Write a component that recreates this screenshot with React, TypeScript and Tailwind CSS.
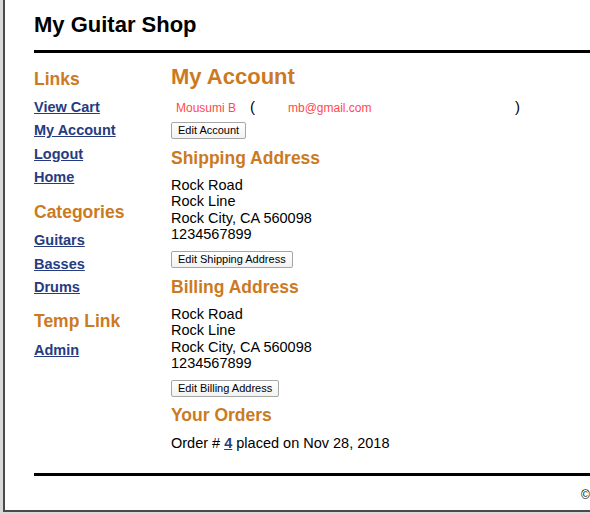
import React from 'react';

const sideLinks = ['View Cart', 'My Account', 'Logout', 'Home'];
const categories = ['Guitars', 'Basses', 'Drums'];

const address = ['Rock Road', 'Rock Line', 'Rock City, CA 560098', '1234567899'];

function EditButton({ label }: { label: string }) {
  return (
    <button className="block h-[17px] px-[6px] border border-[#a6a6a6] rounded-[2px] bg-gradient-to-b from-white to-[#f2f2f2] text-[11px] leading-[15px] text-black">
      {label}
    </button>
  );
}

function Address() {
  return (
    <div className="mt-[8.8px] text-[14.5px] leading-[16.4px] text-black">
      {address.map((line) => (
        <div key={line}>{line}</div>
      ))}
    </div>
  );
}

export default function App() {
  return (
    <div
      className="w-[590px] h-[514px] overflow-hidden bg-[#d9d9d9]"
      style={{ fontFamily: '"Liberation Sans", Arial, sans-serif' }}
    >
      <div className="ml-[3px] w-[800px] h-[512px] bg-white border-l-2 border-b-2 border-[#4a4a4a] pl-[29px]">
        {/* Header */}
        <header className="pt-[13px]">
          <h1 className="text-[22px] leading-[24px] font-bold text-black">My Guitar Shop</h1>
          <div className="mt-[13px] h-[3px] bg-black" />
        </header>

        {/* Body */}
        <div className="flex h-[420px]">
          {/* Sidebar */}
          <aside className="w-[137px] shrink-0">
            <h2 className="mt-[16px] text-[17.5px] leading-[20px] font-bold text-[#cc7a1f]">Links</h2>
            <ul className="mt-[7px]">
              {sideLinks.map((l) => (
                <li key={l} className="text-[14.5px] leading-[23.4px] font-bold">
                  <a href="#" className="text-[#263b80] underline">{l}</a>
                </li>
              ))}
            </ul>
            <h2 className="mt-[12.5px] text-[17.5px] leading-[20px] font-bold text-[#cc7a1f]">Categories</h2>
            <ul className="mt-[7px]">
              {categories.map((l) => (
                <li key={l} className="text-[14.5px] leading-[23.4px] font-bold">
                  <a href="#" className="text-[#263b80] underline">{l}</a>
                </li>
              ))}
            </ul>
            <h2 className="mt-[12px] text-[17.5px] leading-[20px] font-bold text-[#cc7a1f]">Temp Link</h2>
            <div className="mt-[7.8px] text-[14.5px] leading-[23.4px] font-bold">
              <a href="#" className="text-[#263b80] underline">Admin</a>
            </div>
          </aside>

          {/* Main */}
          <main className="flex-1">
            <h1 className="mt-[11px] text-[22px] leading-[26px] font-bold text-[#cc7a1f]">My Account</h1>
            <div className="mt-[8px] flex items-baseline h-[18px] text-[15px] leading-[18px] text-black">
              <span className="w-[79px] pl-[5px] text-[12px] text-[#ff4a4a]">Mousumi B</span>
              <span>(</span>
              <span className="w-[260px] pl-[33px] text-[12px] text-[#ff4a4a]">mb@gmail.com</span>
              <span>)</span>
            </div>
            <div className="mt-[6px]">
              <EditButton label="Edit Account" />
            </div>

            <h2 className="mt-[9px] text-[17.5px] leading-[20px] font-bold text-[#cc7a1f]">Shipping Address</h2>
            <Address />
            <div className="mt-[8.6px]">
              <EditButton label="Edit Shipping Address" />
            </div>

            <h2 className="mt-[9px] text-[17.5px] leading-[20px] font-bold text-[#cc7a1f]">Billing Address</h2>
            <Address />
            <div className="mt-[8.6px]">
              <EditButton label="Edit Billing Address" />
            </div>

            <h2 className="mt-[8px] text-[17.5px] leading-[20px] font-bold text-[#cc7a1f]">Your Orders</h2>
            <p className="mt-[9px] text-[14.5px] leading-[18px] text-black">
              Order #{' '}
              <a href="#" className="font-bold text-[#263b80] underline">4</a> placed on Nov 28, 2018
            </p>
          </main>
        </div>

        {/* Footer */}
        <footer>
          <div className="h-[3px] bg-black" />
          <p className="mt-[12px] pl-[547px] text-[12px] leading-[14px] text-black">©</p>
        </footer>
      </div>
    </div>
  );
}
